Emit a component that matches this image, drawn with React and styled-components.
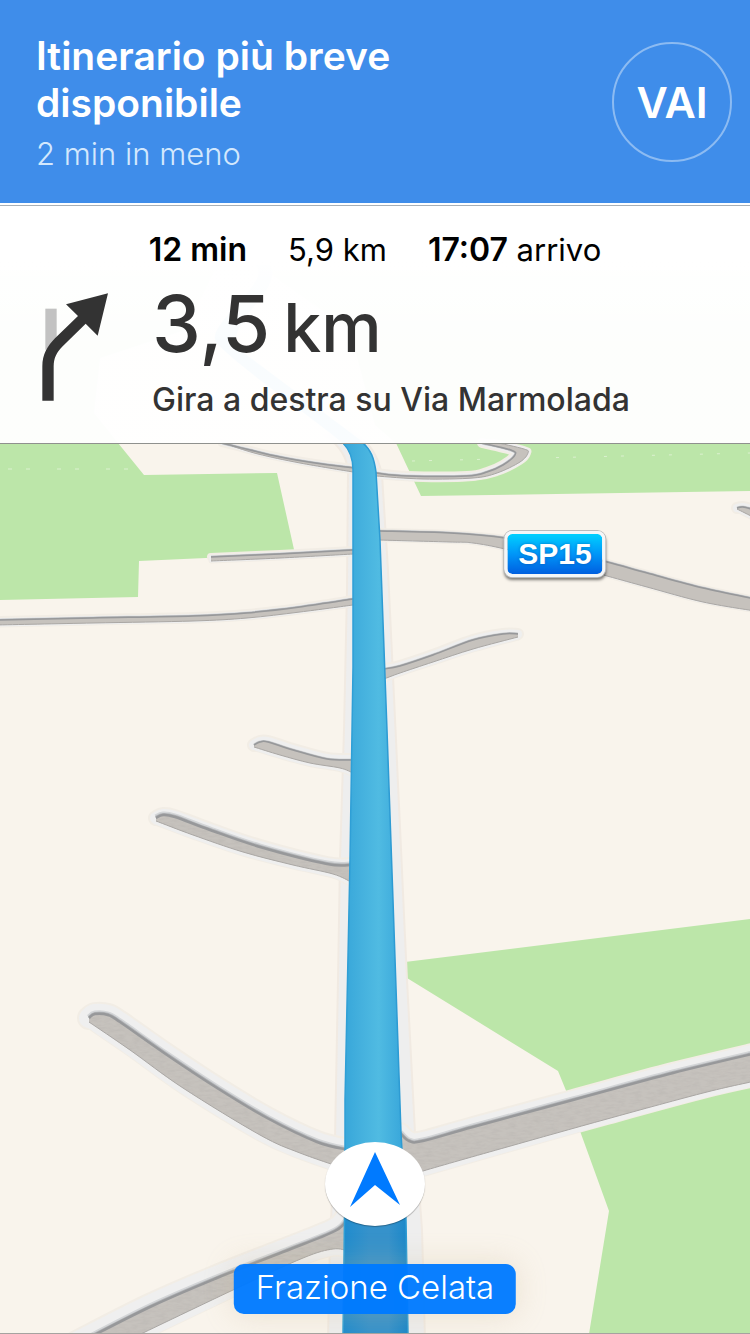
import React from 'react';
import styled, { createGlobalStyle } from 'styled-components';

// Each road has an upper and a lower edge (left to right), plus the width of its light kerb
const ROADS = [
    {
        id: 'north-west', rim: 2,
        top: [[222, 443], [250, 450], [280, 457], [315, 463], [353, 468]],
        bottom: [[232, 446], [258, 454], [300, 463], [353, 472]],
    },
    {
        id: 'stub-field', rim: 2,
        top: [[211, 557], [280, 554], [353, 550]],
        bottom: [[211, 561], [280, 558], [353, 554]],
    },
    {
        id: 'west', rim: 2,
        top: [[-5, 620], [93, 618], [193, 616], [247, 613], [300, 607], [353, 599]],
        bottom: [[-5, 625], [93, 623], [193, 621], [247, 618], [300, 612], [353, 605]],
    },
    {
        id: 'sp15', rim: 1,
        top: [[378, 531], [450, 533], [505, 538], [555, 549], [607, 562], [647, 573], [703, 588], [755, 599]],
        bottom: [[378, 540], [450, 542], [473, 543], [505, 549], [555, 562], [607, 576], [647, 587], [703, 602], [755, 611]],
    },
    {
        id: 'hook', rim: 3,
        top: [[376, 473], [407, 476], [467, 476], [487, 472], [503, 465], [515, 455], [511, 450], [482, 443]],
        bottom: [[376, 476], [423, 479], [473, 478], [497, 473], [520, 462], [528, 453], [524, 449], [494, 442]],
    },
    {
        id: 'east-stub', rim: 4,
        top: [[384, 669], [400, 666], [433, 655], [473, 640], [503, 634], [518, 634]],
        bottom: [[384, 679], [400, 673], [433, 662], [473, 649], [518, 637]],
    },
    {
        id: 'far-east', rim: 4,
        top: [[737, 508], [743, 507], [755, 510]],
        bottom: [[737, 509], [745, 513], [755, 518]],
    },
    {
        id: 'stub-high', rim: 5,
        top: [[254, 745], [260, 742], [268, 742], [293, 750], [327, 759], [353, 760]],
        bottom: [[254, 747], [280, 755], [310, 763], [340, 768], [353, 773]],
    },
    {
        id: 'stub-mid', rim: 6,
        top: [[156, 818], [163, 815], [175, 817], [210, 830], [260, 847], [327, 864], [351, 865]],
        bottom: [[156, 821], [193, 835], [243, 852], [293, 865], [333, 874], [351, 882]],
    },
    {
        id: 'stub-low', rim: 10,
        top: [[89, 1018], [95, 1014], [108, 1015], [120, 1022], [167, 1055], [217, 1088], [267, 1118], [317, 1142], [349, 1150]],
        bottom: [[89, 1022], [130, 1050], [183, 1088], [260, 1135], [300, 1153], [349, 1170]],
    },
    {
        id: 'south-west', rim: 12,
        top: [[77, 1344], [150, 1307], [217, 1278], [283, 1252], [335, 1231], [348, 1218]],
        bottom: [[120, 1344], [233, 1290], [303, 1258], [333, 1249], [348, 1251]],
    },
    {
        id: 'east', rim: 9,
        top: [[400, 1133], [409, 1141], [423, 1141], [473, 1127], [573, 1100], [673, 1073], [765, 1051]],
        bottom: [[400, 1179], [423, 1171], [507, 1147], [607, 1119], [707, 1092], [765, 1079]],
    },
];

// Catmull-Rom through the points, written as cubic segments
const curve = (pts) =>
    pts.slice(1).map((p, i) => {
        const p0 = pts[i - 1] || pts[i];
        const p1 = pts[i];
        const p3 = pts[i + 2] || p;
        const a = [p1[0] + (p[0] - p0[0]) / 6, p1[1] + (p[1] - p0[1]) / 6];
        const b = [p[0] - (p3[0] - p1[0]) / 6, p[1] - (p3[1] - p1[1]) / 6];
        return `C${a} ${b} ${p}`;
    }).join(' ');

const edge = (pts) => `M${pts[0]} ${curve(pts)}`;

const outline = ({ top, bottom }) => {
    const back = [...bottom].reverse();
    return `${edge(top)} L${back[0]} ${curve(back)} Z`;
};

const MapDrawing = () => (
    <MapSvg viewBox="0 203 750 1130" preserveAspectRatio="xMidYMax slice" aria-hidden="true">
        <defs>
            <linearGradient id="route" gradientUnits="userSpaceOnUse" x1="345" x2="401" y1="0" y2="0">
                <stop offset="0" stopColor="#38a7da" />
                <stop offset="0.3" stopColor="#45b1de" />
                <stop offset="0.6" stopColor="#50bbe2" />
                <stop offset="1" stopColor="#3aa8db" />
            </linearGradient>
            <linearGradient id="passed" x1="0" x2="1" y1="0" y2="0">
                <stop offset="0" stopColor="#1f8cce" />
                <stop offset="0.4" stopColor="#3692cb" />
                <stop offset="0.7" stopColor="#3692cb" />
                <stop offset="1" stopColor="#1a87c9" />
            </linearGradient>
            <filter id="asphalt" x="0" y="0" width="100%" height="100%">
                <feTurbulence type="fractalNoise" baseFrequency="0.12 0.4" numOctaves="3" seed="4" />
                <feColorMatrix values="0 0 0 0 0.4  0 0 0 0 0.38  0 0 0 0 0.36  0.5 0 0 0 -0.18" />
                <feComposite in2="SourceGraphic" operator="in" result="grain" />
                <feMerge>
                    <feMergeNode in="SourceGraphic" />
                    <feMergeNode in="grain" />
                </feMerge>
            </filter>
        </defs>

        <rect y="203" width="750" height="1131" fill="#f9f4ec" />

        {/* fields */}
        <g fill="#bce6a9">
            <path d="M0 270 H215 L185 330 L100 358 L94 413 L118 443 L144 475 L277 473 L295 554 L139 561 L138 597 L0 600 Z" />
            <path d="M265 270 H750 V491 L421 496 L396 443 L375 425 L350 330 Z" />
            <path d="M405 962 L750 919 V1334 H589 L609 1211 L580 1131 L567 1093 L558 1071 L407 978 Z" />
        </g>
        <path d="M8 469 H140" stroke="#dcf1d0" strokeDasharray="4 14 4 27" fill="none" />
        <path d="M412 461 L750 453" stroke="#dcf1d0" strokeDasharray="3 14 3 28" fill="none" />

        {/* main road kerb */}
        <path
            d="M325 435 C342 448 347 458 348 472 L347 590 L344 730 L340 860 L338 980 L335 1140 L330 1240 L328 1340 H425 L422 1230 L415 1133 L407 980 L396 740 L388 570 L382 475 C378 455 370 442 350 430 Z"
            fill="#eeeeee" stroke="#f1eae2" strokeWidth="2"
        />

        {ROADS.map((road) => (
            <g key={road.id} fill="#f2ede5" stroke="#f2ede5" strokeLinejoin="round">
                <path d={outline(road)} strokeWidth={road.rim + 3} />
                <path d={edge(road.top)} fill="none" strokeWidth={road.rim * 2 + 4} strokeLinecap="round" />
            </g>
        ))}
        {ROADS.map((road) => (
            <g key={road.id} fill="#efefef" stroke="#efefef" strokeLinejoin="round">
                <path d={outline(road)} strokeWidth={road.rim + 1} />
                <path d={edge(road.top)} fill="none" strokeWidth={road.rim * 2} strokeLinecap="round" />
            </g>
        ))}
        {ROADS.map((road) => (
            <g key={road.id} fill="none">
                <path d={edge(road.top)} stroke="#d3d5d7" strokeWidth={road.rim > 5 ? 7 : 3} />
                <path d={edge(road.top)} stroke="#b0b2b5" strokeWidth={road.rim > 5 ? 4 : 2} />
                <path d={outline(road)} fill="#c6c2bd" filter={road.rim > 5 ? 'url(#asphalt)' : undefined} />
                <path d={edge(road.bottom)} stroke="#aaa7a4" />
                <path d={edge(road.top)} stroke="#97989a" strokeWidth={road.rim > 5 ? 2.5 : 1.5} />
            </g>
        ))}

        {/* route */}
        <path
            d="M255 265 C275 280 205 325 216 342 C235 365 330 430 342 443 C350 450 353 460 353 470 V667 L350 860 L345 1100 V1180 H403 L401 1133 L393 900 L387 730 L380 540 L376 472 C374 458 371 450 363 442 L240 350 C220 325 285 290 270 265 Z"
            fill="url(#route)"
        />
        <path d="M345 1180 H404 L406 1220 L408 1334 H343 Z" fill="url(#passed)" />
        <path d="M343 443 C351 451 353 460 353 470 V667 L350 860 L345 1100 V1180 L343 1334" fill="none" stroke="#2f9fd6" strokeWidth="1.5" />
        <path d="M363 443 C371 450 374 458 376 472 L380 540 L387 730 L393 900 L401 1133 L406 1220 L408 1334" fill="none" stroke="#2d9bd3" strokeWidth="1.5" />
    </MapSvg>
);

const TurnArrow = () => (
    <svg width="67" height="108" viewBox="126 280 201 324" aria-hidden="true">
        <path d="M136 327 H170 V450 H136 Z" fill="#c2c2c2" />
        <path
            d="M127 603 V500 C127 465 142 439 165 416 L234 349 L198 314 L324 281 L293 408 L257 372 L188 440 C170 458 161 475 161 500 V603 Z"
            fill="#333333"
        />
    </svg>
);

const App = () => (
    <>
        <GlobalStyle />
        <Screen>
            <Suggestion>
                <SuggestionText>
                    <Title>Itinerario più breve disponibile</Title>
                    <Saving>2 min in meno</Saving>
                </SuggestionText>
                <GoButton type="button">VAI</GoButton>
            </Suggestion>

            <Stage>
                <MapDrawing />
                <Panel>
                    <Summary>
                        <strong>12 min</strong>
                        <span>5,9 km</span>
                        <span><strong>17:07</strong> arrivo</span>
                    </Summary>
                    <Maneuver>
                        <TurnArrow />
                        <div>
                            <Distance>
                                <span>3,5</span> <small>km</small>
                            </Distance>
                            <Instruction>Gira a destra su Via Marmolada</Instruction>
                        </div>
                    </Maneuver>
                </Panel>

                <RoadBadge>SP15</RoadBadge>
                <Position>
                    <svg width="50" height="55" viewBox="0 0 50 55" aria-hidden="true">
                        <path d="M25 0 L50 53 L25 33 L0 55 Z" fill="#007aff" />
                    </svg>
                </Position>
                <PlaceLabel>Frazione Celata</PlaceLabel>
            </Stage>
        </Screen>
    </>
);

const GlobalStyle = createGlobalStyle`
    * { box-sizing: border-box; }
    body {
        margin: 0;
        font-family: Inter, 'Liberation Sans', sans-serif;
    }
`;

const Screen = styled.main`
    min-height: 100vh;
    display: flex;
    flex-direction: column;
    overflow: hidden;
`;

const Suggestion = styled.header`
    display: flex;
    align-items: center;
    justify-content: space-between;
    gap: 24px;
    padding: 30px 18px 29px 36px;
    background: #3f8dea;
    color: #fff;
`;

const SuggestionText = styled.div`
    padding-top: 2px;
`;

const Title = styled.h1`
    margin: 0 0 8px;
    max-width: 400px;
    font-size: 39px;
    line-height: 47px;
    font-weight: 600;
`;

const Saving = styled.p`
    margin: 0;
    font-size: 31px;
    line-height: 40px;
    font-weight: 300;
    color: #d3e8fd;
`;

const GoButton = styled.button`
    flex: none;
    width: 120px;
    height: 120px;
    padding: 0;
    border: 2px solid #8cbbf2;
    border-radius: 50%;
    background: transparent;
    color: #fff;
    font-family: inherit;
    font-size: 43px;
    font-weight: 600;
`;

const Stage = styled.section`
    position: relative;
    flex: 1;
    border-bottom: 1px solid #a5a3a0;
`;

const MapSvg = styled.svg`
    position: absolute;
    inset: 0;
    width: 100%;
    height: 100%;
`;

const Panel = styled.div`
    position: relative;
    padding: 24px 18px 23px 42px;
    background: linear-gradient(#fff 20%, rgba(255, 255, 255, 0.97) 60%);
    border-top: 1px solid #a9b0b6;
    border-bottom: 1px solid #8f918e;
    box-shadow: 0 -2px #fff;
    margin-top: 2px;
    color: #333;
`;

const Summary = styled.div`
    display: flex;
    justify-content: center;
    gap: 41px;
    margin: 0 0 9px -24px;
    font-size: 31px;
    line-height: 40px;
    color: #000;
    strong { font-size: 32px; font-weight: 600; }
`;

const Maneuver = styled.div`
    display: flex;
    align-items: flex-start;
    gap: 43px;
    svg { flex: none; margin-top: 14px; }
`;

const Distance = styled.p`
    display: flex;
    align-items: baseline;
    gap: 13px;
    margin: 0 0 11px;
    font-size: 78px;
    line-height: 90px;
    font-weight: 500;
    small { font-size: 68px; line-height: 1; }
`;

const Instruction = styled.p`
    margin: 0;
    font-size: 32px;
    line-height: 40px;
    font-weight: 500;
`;

const RoadBadge = styled.span`
    position: absolute;
    left: 74%;
    top: 328px;
    transform: translateX(-50%);
    padding: 0 11px;
    border: 3px solid #f4f6f8;
    border-radius: 8px;
    background: linear-gradient(#00d0ff, #0096f8 50%, #005fe0);
    background-clip: padding-box;
    box-shadow: 0 0 0 1px #b9bbbd, 0 3px 3px rgba(0, 0, 0, 0.5);
    color: #fff;
    font-family: 'Liberation Sans', Arial, sans-serif;
    font-size: 30px;
    line-height: 40px;
    font-weight: 700;
    text-shadow: 0 0 3px rgba(0, 60, 140, 0.5);
`;

const Position = styled.div`
    position: absolute;
    left: 50%;
    bottom: 107px;
    transform: translateX(-50%);
    display: flex;
    justify-content: center;
    width: 100px;
    height: 84px;
    padding-top: 10px;
    border-radius: 50%;
    background: #fff;
    box-shadow: 0 1px 1px rgba(0, 0, 0, 0.3);
`;

const PlaceLabel = styled.span`
    position: absolute;
    left: 50%;
    bottom: 19px;
    transform: translateX(-50%);
    padding: 0 22px 4px;
    border-radius: 10px;
    background: rgba(0, 122, 255, 0.96);
    box-shadow: 0 0 30px rgba(200, 180, 140, 0.3);
    color: #fff;
    font-size: 33px;
    line-height: 46px;
    font-weight: 300;
    white-space: nowrap;
`;

export default App;
